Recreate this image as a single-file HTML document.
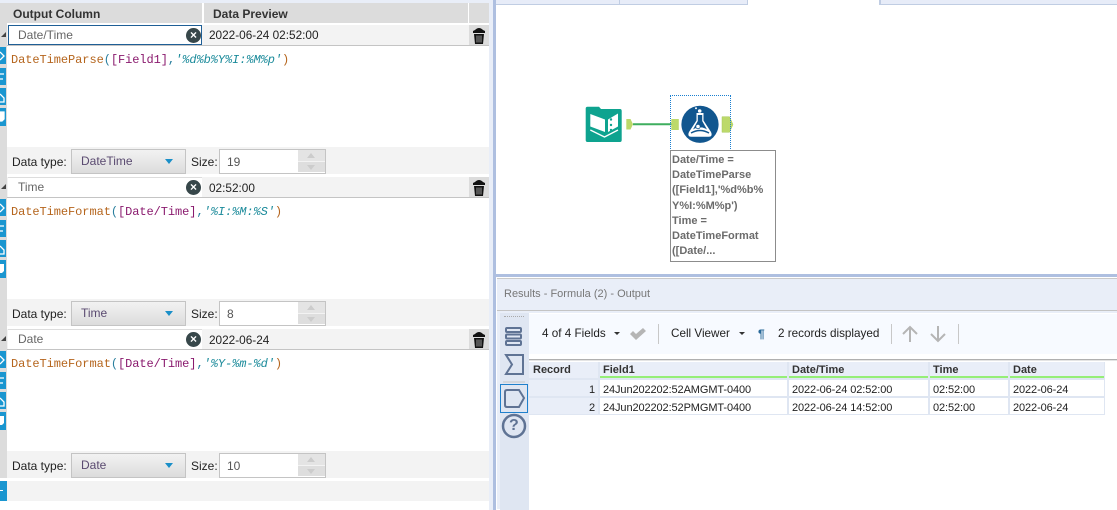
<!DOCTYPE html>
<html><head><meta charset="utf-8"><style>
html,body{margin:0;padding:0;background:#fff}
#p{position:relative;width:1117px;height:510px;overflow:hidden;background:#fff;font-family:"Liberation Sans",sans-serif;font-size:12px;color:#222}
#p div,#p span.a,#p svg{position:absolute}
.t{white-space:nowrap;line-height:16px}
.code{font-family:"Liberation Mono",monospace;font-size:12px;white-space:pre;line-height:16px;letter-spacing:-.07px;color:#b5651d}
.code b{font-weight:normal;color:#8a1a6e}
.code i{color:#1a8a9a}
.code u{text-decoration:none;color:#2a7f9e}
.th{font-weight:bold;color:#333}
.c{font-size:11px;letter-spacing:-.1px}
.w{background:#fff}
</style></head><body><div id="p">
<!-- left panel base -->
<div style="left:0;top:0;width:489px;height:3px;background:#e9eef8"></div>
<div style="left:0;top:3px;width:7px;height:475px;background:#dcdcdc"></div>
<div style="left:0;top:3px;width:489px;height:20px;background:#dcdcdc"></div>
<div style="left:202px;top:3px;width:2px;height:20px;background:#fff"></div>
<div style="left:468px;top:3px;width:1px;height:20px;background:#fff"></div>
<div class="t th" style="left:13px;top:6px;font-size:12px">Output Column</div>
<div class="t th" style="left:213px;top:6px;font-size:12px">Data Preview</div>
<!-- Row 1 -->
<div style="left:7px;top:25px;width:482px;height:20px;background:#f3f3f3;border-bottom:1px solid #c4c4c4"></div>
<div style="left:8px;top:25px;width:192px;height:18px;background:#fff;border:1px solid #1f5f96"></div>
<div class="t" style="left:18px;top:27px;color:#666">Date/Time</div>
<div style="left:186px;top:28px;width:15px;height:15px;border-radius:50%;background:#37474a;color:#fff;font-size:12px;line-height:15px;text-align:center;font-weight:bold">×</div>
<div class="t" style="left:209px;top:27px;font-size:11.800px">2022-06-24 02:52:00</div>
<div style="left:469px;top:25px;width:20px;height:20px;background:#dcdcdc"></div>
<svg style="left:472px;top:27px" width="14" height="17" viewBox="0 0 14 17"><path d="M3 3Q7-1 11 3L13 4V6H1V4Z" fill="#111"/><path d="M2 7H12L11 17H3Z" fill="#111"/><path d="M5 8.500V15.500M7 8.500V15.500M9 8.500V15.500" stroke="#bbb" stroke-width=".8"/></svg>
<div class="code" style="left:11px;top:52px">DateTimeParse<u>(</u><b>[Field1]</b><u>,</u><i>'%d%b%Y%I:%M%p'</i>)</div>
<div style="left:7px;top:147px;width:482px;height:27px;background:#f3f3f3"></div>
<div class="t" style="left:12px;top:154px">Data type:</div>
<div style="left:71px;top:149px;width:113px;height:23px;background:linear-gradient(#f2f2f2,#dcdcdc);border:1px solid #c4c4c4"></div>
<div class="t" style="left:81px;top:153px;color:#5a4a70">DateTime</div>
<div style="left:165px;top:159px;border-left:4.500px solid transparent;border-right:4.500px solid transparent;border-top:5px solid #1a8fc8"></div>
<div class="t" style="left:191px;top:154px">Size:</div>
<div style="left:219px;top:149px;width:105px;height:23px;background:#fff;border:1px solid #c4c4c4"></div>
<div class="t" style="left:227px;top:154px;color:#555">19</div>
<div style="left:298px;top:150px;width:27px;height:11px;background:#e4e4e4;border-bottom:1px solid #f3f3f3"></div>
<div style="left:298px;top:162px;width:27px;height:10px;background:#dedede"></div>
<div style="left:307px;top:153px;border-left:4.500px solid transparent;border-right:4.500px solid transparent;border-bottom:5px solid #ccc"></div>
<div style="left:307px;top:165px;border-left:4.500px solid transparent;border-right:4.500px solid transparent;border-top:5px solid #ccc"></div>
<!-- Row 2 -->
<div style="left:7px;top:177px;width:482px;height:20px;background:#f3f3f3;border-bottom:1px solid #c4c4c4"></div>
<div style="left:8px;top:177px;width:194px;height:19px;background:#fff;border-top:1px solid #ddd"></div>
<div class="t" style="left:18px;top:179px;color:#666">Time</div>
<div style="left:186px;top:180px;width:15px;height:15px;border-radius:50%;background:#37474a;color:#fff;font-size:12px;line-height:15px;text-align:center;font-weight:bold">×</div>
<div class="t" style="left:209px;top:180px;font-size:11.800px">02:52:00</div>
<div style="left:469px;top:177px;width:20px;height:20px;background:#dcdcdc"></div>
<svg style="left:472px;top:179px" width="14" height="17" viewBox="0 0 14 17"><path d="M3 3Q7-1 11 3L13 4V6H1V4Z" fill="#111"/><path d="M2 7H12L11 17H3Z" fill="#111"/><path d="M5 8.500V15.500M7 8.500V15.500M9 8.500V15.500" stroke="#bbb" stroke-width=".8"/></svg>
<div class="code" style="left:11px;top:204px">DateTimeFormat<u>(</u><b>[Date/Time]</b><u>,</u><i>'%I:%M:%S'</i>)</div>
<div style="left:7px;top:299px;width:482px;height:27px;background:#f3f3f3"></div>
<div class="t" style="left:12px;top:306px">Data type:</div>
<div style="left:71px;top:301px;width:113px;height:23px;background:linear-gradient(#f2f2f2,#dcdcdc);border:1px solid #c4c4c4"></div>
<div class="t" style="left:81px;top:305px;color:#5a4a70">Time</div>
<div style="left:165px;top:311px;border-left:4.500px solid transparent;border-right:4.500px solid transparent;border-top:5px solid #1a8fc8"></div>
<div class="t" style="left:191px;top:306px">Size:</div>
<div style="left:219px;top:301px;width:105px;height:23px;background:#fff;border:1px solid #c4c4c4"></div>
<div class="t" style="left:227px;top:306px;color:#555">8</div>
<div style="left:298px;top:302px;width:27px;height:11px;background:#e4e4e4;border-bottom:1px solid #f3f3f3"></div>
<div style="left:298px;top:314px;width:27px;height:10px;background:#dedede"></div>
<div style="left:307px;top:305px;border-left:4.500px solid transparent;border-right:4.500px solid transparent;border-bottom:5px solid #ccc"></div>
<div style="left:307px;top:317px;border-left:4.500px solid transparent;border-right:4.500px solid transparent;border-top:5px solid #ccc"></div>
<!-- Row 3 -->
<div style="left:7px;top:329px;width:482px;height:20px;background:#f3f3f3;border-bottom:1px solid #c4c4c4"></div>
<div style="left:8px;top:329px;width:194px;height:19px;background:#fff;border-top:1px solid #ddd"></div>
<div class="t" style="left:18px;top:331px;color:#666">Date</div>
<div style="left:186px;top:332px;width:15px;height:15px;border-radius:50%;background:#37474a;color:#fff;font-size:12px;line-height:15px;text-align:center;font-weight:bold">×</div>
<div class="t" style="left:209px;top:332px;font-size:11.800px">2022-06-24</div>
<div style="left:469px;top:329px;width:20px;height:20px;background:#dcdcdc"></div>
<svg style="left:472px;top:331px" width="14" height="17" viewBox="0 0 14 17"><path d="M3 3Q7-1 11 3L13 4V6H1V4Z" fill="#111"/><path d="M2 7H12L11 17H3Z" fill="#111"/><path d="M5 8.500V15.500M7 8.500V15.500M9 8.500V15.500" stroke="#bbb" stroke-width=".8"/></svg>
<div class="code" style="left:11px;top:356px">DateTimeFormat<u>(</u><b>[Date/Time]</b><u>,</u><i>'%Y-%m-%d'</i>)</div>
<div style="left:7px;top:451px;width:482px;height:27px;background:#f3f3f3"></div>
<div class="t" style="left:12px;top:458px">Data type:</div>
<div style="left:71px;top:453px;width:113px;height:23px;background:linear-gradient(#f2f2f2,#dcdcdc);border:1px solid #c4c4c4"></div>
<div class="t" style="left:81px;top:457px;color:#5a4a70">Date</div>
<div style="left:165px;top:463px;border-left:4.500px solid transparent;border-right:4.500px solid transparent;border-top:5px solid #1a8fc8"></div>
<div class="t" style="left:191px;top:458px">Size:</div>
<div style="left:219px;top:453px;width:105px;height:23px;background:#fff;border:1px solid #c4c4c4"></div>
<div class="t" style="left:227px;top:458px;color:#555">10</div>
<div style="left:298px;top:454px;width:27px;height:11px;background:#e4e4e4;border-bottom:1px solid #f3f3f3"></div>
<div style="left:298px;top:466px;width:27px;height:10px;background:#dedede"></div>
<div style="left:307px;top:457px;border-left:4.500px solid transparent;border-right:4.500px solid transparent;border-bottom:5px solid #ccc"></div>
<div style="left:307px;top:469px;border-left:4.500px solid transparent;border-right:4.500px solid transparent;border-top:5px solid #ccc"></div>
<!-- bottom row -->
<div style="left:0;top:481px;width:7px;height:20px;background:#1a96d0"></div>
<div class="w" style="left:0;top:490px;width:3px;height:1px"></div>
<div style="left:7px;top:481px;width:482px;height:20px;background:#f3f3f3"></div>
<!-- row chevrons -->
<svg style="left:0;top:31px" width="7" height="8" viewBox="0 0 7 8"><path d="M1 6L6 1V6Z" fill="#444"/></svg>
<svg style="left:0;top:183px" width="7" height="8" viewBox="0 0 7 8"><path d="M1 6L6 1V6Z" fill="#444"/></svg>
<svg style="left:0;top:335px" width="7" height="8" viewBox="0 0 7 8"><path d="M1 6L6 1V6Z" fill="#444"/></svg>
<!-- side icons -->
<svg style="left:0;top:47px" width="6" height="79" viewBox="0 0 6 79"><rect width="6" height="17" fill="#1a96d0"/><rect y="21" width="6" height="17" fill="#1a96d0"/><rect y="41" width="6" height="17" fill="#1a96d0"/><rect y="61" width="6" height="18" fill="#1a96d0"/><path d="M0 5L4 9L0 13M0 27H4M0 32H3M0 47L4 51V55H0M0 65H4V72L2 74H0Z" fill="none" stroke="#fff" stroke-width="1.300"/><path d="M0 65H4V72L2 74H0Z" fill="#fff"/></svg>
<svg style="left:0;top:199px" width="6" height="79" viewBox="0 0 6 79"><rect width="6" height="17" fill="#1a96d0"/><rect y="21" width="6" height="17" fill="#1a96d0"/><rect y="41" width="6" height="17" fill="#1a96d0"/><rect y="61" width="6" height="18" fill="#1a96d0"/><path d="M0 5L4 9L0 13M0 27H4M0 32H3M0 47L4 51V55H0" fill="none" stroke="#fff" stroke-width="1.300"/><path d="M0 65H4V72L2 74H0Z" fill="#fff"/></svg>
<svg style="left:0;top:351px" width="6" height="79" viewBox="0 0 6 79"><rect width="6" height="17" fill="#1a96d0"/><rect y="21" width="6" height="17" fill="#1a96d0"/><rect y="41" width="6" height="17" fill="#1a96d0"/><rect y="61" width="6" height="18" fill="#1a96d0"/><path d="M0 5L4 9L0 13M0 27H4M0 32H3M0 47L4 51V55H0" fill="none" stroke="#fff" stroke-width="1.300"/><path d="M0 65H4V72L2 74H0Z" fill="#fff"/></svg>
<!-- vertical splitter -->
<div style="left:489px;top:0;width:4px;height:510px;background:#e9eef8"></div>
<div style="left:493px;top:0;width:3px;height:510px;background:#aebfe0"></div>
<!-- top tabs -->
<div style="left:496px;top:0;width:381px;height:4px;background:#e7ecf8;border-bottom:1px solid #c0cde3"></div>
<div style="left:619px;top:0;width:1px;height:4px;background:#c0cde3"></div>
<div style="left:747px;top:0;width:131px;height:5px;background:#fff;border-left:1px solid #c0cde3;border-right:1px solid #c0cde3"></div>
<div style="left:880px;top:0;width:237px;height:4px;background:#e7ecf8;border-bottom:1px solid #c0cde3;border-left:1px solid #c0cde3"></div>
<!-- canvas -->
<svg style="left:580px;top:100px" width="160" height="50" viewBox="0 0 160 50">
<path d="M5.700 8.500Q5.700 6.700 7.500 6.700H19L21 9H40Q41.700 9 41.700 11V40Q41.700 42 40 42H7.500Q5.700 42 5.700 40Z" fill="#0ea38f"/>
<path d="M10.300 14L25 19.500V32L10.300 26.500Z" fill="#fff"/><path d="M28 19.500L38 13.500V26.500L28 32Z" fill="#fff"/>
<path d="M10.300 30L24.500 37L38 30" stroke="#fff" stroke-width="1.300" fill="none"/>
<circle cx="31" cy="19.500" r="1.200" fill="#0ea38f"/><circle cx="31" cy="25" r="1.200" fill="#0ea38f"/><circle cx="31" cy="30" r="1.200" fill="#0ea38f"/>
<path d="M46.300 19H50.500L53 24.300L50.500 29.500H46.300Z" fill="#bcd96a"/>
<path d="M53 24.300H92" stroke="#3fae5f" stroke-width="2"/>
<rect x="91.300" y="19" width="7.500" height="11" fill="#bcd96a"/>
<circle cx="120" cy="24.300" r="18.600" fill="#11568f"/>
<path d="M116.500 13H123.500V20.500L131 32Q133 36.700 128.500 36.700H111.500Q107 36.700 109 32L116.500 20.500Z" fill="#fff"/>
<path d="M117.800 15H122.200V21L127 29.500Q120 25 113 29.500L117.800 21Z" fill="#11568f"/>
<path d="M111 33Q120 28 129 33" stroke="#11568f" stroke-width="1.500" fill="none"/>
<circle cx="118" cy="26.500" r="2.200" fill="#fff" stroke="#11568f" stroke-width=".8"/>
<circle cx="122.300" cy="28.500" r="1" fill="#fff"/>
<circle cx="119.700" cy="11" r="1.800" fill="#fff"/><circle cx="116" cy="8.300" r="1" fill="#fff"/>
<path d="M142 16.700H149.500L153 24.500L149.500 32.300H142Z" fill="#bcd96a" stroke="#a6c858" stroke-width=".5"/>
</svg>
<div style="left:670px;top:95px;width:59px;height:55px;border:1px dotted #1a7fd0;border-bottom:none"></div>
<div style="left:670px;top:150px;width:104px;height:110px;border:1px solid #8c8c8c;background:#fff"></div>
<div class="t" style="left:672px;top:153px;font-size:11px;line-height:15.200px;color:#6b6b6b;font-weight:bold;white-space:pre">Date/Time =
DateTimeParse
([Field1],'%d%b%
Y%I:%M%p')
Time =
DateTimeFormat
([Date/...</div>
<!-- horizontal splitter -->
<div style="left:496px;top:274px;width:621px;height:3px;background:#aebfe0"></div>
<!-- results -->
<div style="left:497px;top:278px;width:620px;height:231px;background:#e9eef8"></div>
<div style="left:497px;top:278px;width:620px;height:31px;background:#e9eef8;border-top:1px solid #c9c9c9;border-bottom:1px solid #c4c4c4"></div>
<div class="t" style="left:504px;top:286px;color:#777;font-size:11px">Results - Formula (2) - Output</div>
<div style="left:500px;top:313px;width:29px;height:197px;background:#dfe6f2"></div>
<div style="left:529px;top:313px;width:588px;height:197px;background:#fff"></div>
<div style="left:529px;top:314px;width:588px;height:40px;background:#f7faff"></div>
<div style="left:529px;top:359px;width:588px;height:1px;background:#b0b0b0"></div>
<div style="left:529px;top:360px;width:588px;height:1px;background:#e4e4e4"></div>
<div class="t" style="left:542px;top:326px;font-size:11.700px">4 of 4 Fields</div>
<div style="left:614px;top:332px;border-left:3px solid transparent;border-right:3px solid transparent;border-top:3px solid #333"></div>
<svg style="left:629px;top:326px" width="18" height="16" viewBox="0 0 18 16"><path d="M1 8L4 5L7 8L14 2L17 5L7 14Z" fill="#b5b5b5"/></svg>
<div style="left:658px;top:324px;width:1px;height:20px;background:#c8c8c8"></div>
<div class="t" style="left:671px;top:326px;font-size:11.700px">Cell Viewer</div>
<div style="left:739px;top:332px;border-left:3px solid transparent;border-right:3px solid transparent;border-top:3px solid #333"></div>
<div class="t" style="left:758px;top:326px;color:#2a6a9a;font-weight:bold">¶</div>
<div class="t" style="left:778px;top:326px;font-size:11.700px">2 records displayed</div>
<div style="left:891px;top:324px;width:1px;height:20px;background:#c8c8c8"></div>
<svg style="left:901px;top:325px" width="46" height="18" viewBox="0 0 46 18"><path d="M9 17V2M2 9L9 2L16 9M37 1V16M30 9L37 16L44 9" stroke="#b5b5b5" stroke-width="2" fill="none"/></svg>
<div style="left:958px;top:324px;width:1px;height:20px;background:#c8c8c8"></div>
<!-- sidebar icons -->
<div style="left:504px;top:316px;width:20px;height:1px;border-top:1px dotted #aaa"></div>
<svg style="left:500px;top:320px" width="29" height="125" viewBox="0 0 29 125" fill="none" stroke="#5f7394" stroke-width="2">
<rect x="6" y="8" width="15" height="4" rx="1"/><rect x="6" y="14.500" width="15" height="4" rx="1"/><rect x="6" y="21" width="15" height="4" rx="1"/>
<path d="M6 35H23V54H6L12 44.500Z"/>
<path d="M3 62H25" stroke="#c6c6c6" stroke-width="1"/>
<path d="M7 70H19L24 78L19 87H7Q5 87 5 85V72Q5 70 7 70Z"/>
<circle cx="14" cy="106" r="11" stroke-width="2.500"/>
</svg>
<div style="left:500px;top:384px;width:26px;height:27px;border:1px solid #1f80cc"></div>
<div class="t" style="left:509px;top:417px;font-size:16px;line-height:18px;font-weight:bold;color:#5f7394">?</div>
<!-- table -->
<div style="left:529px;top:362px;width:576px;height:16px;background:#e9eef8"></div>
<div style="left:529px;top:362px;width:71px;height:52px;background:#e9eef8"></div>
<div style="left:600px;top:376px;width:187px;height:2px;background:#95ee77"></div>
<div style="left:789px;top:376px;width:139px;height:2px;background:#95ee77"></div>
<div style="left:930px;top:376px;width:78px;height:2px;background:#95ee77"></div>
<div style="left:1010px;top:376px;width:94px;height:2px;background:#95ee77"></div>
<div style="left:598px;top:362px;width:2px;height:52px;background:#dfe6f2"></div>
<div style="left:787px;top:362px;width:2px;height:52px;background:#dfe6f2"></div>
<div style="left:928px;top:362px;width:2px;height:52px;background:#dfe6f2"></div>
<div style="left:1008px;top:362px;width:2px;height:52px;background:#dfe6f2"></div>
<div style="left:1104px;top:362px;width:1px;height:52px;background:#dfe6f2"></div>
<div style="left:529px;top:396px;width:576px;height:2px;background:#dfe6f2"></div>
<div style="left:529px;top:414px;width:576px;height:1px;background:#dfe6f2"></div>
<div style="left:529px;top:378px;width:576px;height:2px;background:#dfe6f2"></div>
<div class="t th" style="left:533px;top:362px;font-size:11px">Record</div>
<div class="t th" style="left:603px;top:362px;font-size:11px">Field1</div>
<div class="t th" style="left:792px;top:362px;font-size:11px">Date/Time</div>
<div class="t th" style="left:933px;top:362px;font-size:11px">Time</div>
<div class="t th" style="left:1013px;top:362px;font-size:11px">Date</div>
<div class="t c" style="left:589px;top:382px">1</div>
<div class="t c" style="left:589px;top:400px">2</div>
<div class="t c" style="left:603px;top:382px">24Jun202202:52AMGMT-0400</div>
<div class="t c" style="left:603px;top:400px">24Jun202202:52PMGMT-0400</div>
<div class="t c" style="left:792px;top:382px">2022-06-24 02:52:00</div>
<div class="t c" style="left:792px;top:400px">2022-06-24 14:52:00</div>
<div class="t c" style="left:933px;top:382px">02:52:00</div>
<div class="t c" style="left:933px;top:400px">02:52:00</div>
<div class="t c" style="left:1013px;top:382px">2022-06-24</div>
<div class="t c" style="left:1013px;top:400px">2022-06-24</div>
</div></body></html>
